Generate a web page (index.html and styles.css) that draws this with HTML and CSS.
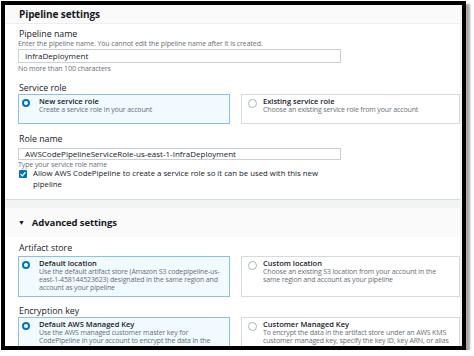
FILE: index.html
```html
<!DOCTYPE html>
<html lang="en">
<head>
  <meta charset="UTF-8" />
  <title>Create pipeline</title>
  <meta name="viewport" content="width=device-width, initial-scale=1.0" />
  <link rel="stylesheet" href="styles.css">
</head>
<body>
  <div class="frame">
    <section class="panel first">
      <div class="panel-head"><h2>Pipeline settings</h2></div>
      <div class="panel-body">
        <div class="label">Pipeline name</div>
        <div class="desc lead">Enter the pipeline name. You cannot edit the pipeline name after it is created.</div>
        <div class="input">InfraDeployment</div>
        <div class="desc hint first-hint">No more than 100 characters</div>

        <div class="label gap">Service role</div>
        <div class="tiles">
          <div class="tile on">
            <span class="radio"></span>
            <div>
              <div class="tile-title">New service role</div>
              <div class="desc">Create a service role in your account</div>
            </div>
          </div>
          <div class="tile">
            <span class="radio"></span>
            <div>
              <div class="tile-title">Existing service role</div>
              <div class="desc">Choose an existing service role from your account</div>
            </div>
          </div>
        </div>

        <div class="label gap">Role name</div>
        <div class="input small">AWSCodePipelineServiceRole-us-east-1-InfraDeployment</div>
        <div class="desc hint">Type your service role name</div>
        <div class="check">
          <span class="box">
            <svg viewBox="0 0 10 10" width="8" height="8"><path d="M2 5.2 L4.2 7.3 L8 2.8" fill="none" stroke="#fff" stroke-width="1.6"/></svg>
          </span>
          <span>Allow AWS CodePipeline to create a service role so it can be used with this new pipeline</span>
        </div>
      </div>
    </section>

    <section class="panel">
      <div class="panel-head tall"><h2><span class="caret">&#9660;</span>Advanced settings</h2></div>
      <div class="panel-body">
        <div class="label">Artifact store</div>
        <div class="tiles">
          <div class="tile on">
            <span class="radio"></span>
            <div>
              <div class="tile-title">Default location</div>
              <div class="desc">Use the default artifact store (Amazon S3 codepipeline-us-<br>east-1-458144523623) designated in the same region and<br>account as your pipeline</div>
            </div>
          </div>
          <div class="tile">
            <span class="radio"></span>
            <div>
              <div class="tile-title">Custom location</div>
              <div class="desc">Choose an existing S3 location from your account in the<br>same region and account as your pipeline</div>
            </div>
          </div>
        </div>

        <div class="label gap">Encryption key</div>
        <div class="tiles">
          <div class="tile on">
            <span class="radio"></span>
            <div>
              <div class="tile-title">Default AWS Managed Key</div>
              <div class="desc">Use the AWS managed customer master key for<br>CodePipeline in your account to encrypt the data in the</div>
            </div>
          </div>
          <div class="tile">
            <span class="radio"></span>
            <div>
              <div class="tile-title">Customer Managed Key</div>
              <div class="desc">To encrypt the data in the artifact store under an AWS KMS<br>customer managed key, specify the key ID, key ARN, or alias</div>
            </div>
          </div>
        </div>
      </div>
    </section>
  </div>
</body>
</html>
```

FILE: styles.css
```css
body {
  margin: 0;
  background: #fff;
  font-family: 'Open Sans', 'Noto Sans', sans-serif;
  color: #16191f;
}

.frame {
  margin: 1px 0 0 1px;
  width: 465px;
  height: 349px;
  box-sizing: border-box;
  border: 4px solid #000;
  background: #f2f3f3;
  box-shadow: 4px 3px 2px rgba(0,0,0,0.35);
  overflow: hidden;
}

.panel {
  background: #fff;
  margin-right: 2px;
}

.panel.first {
  border-bottom: 1px solid #d5dbdb;
  margin-bottom: 8px;
}

.panel-head {
  height: 18px;
  background: #fafafa;
  border-bottom: 1px solid #eaeded;
  padding-left: 14px;
  display: flex;
  align-items: center;
}

.panel-head.tall {
  height: 29px;
  border-bottom: none;
  padding-left: 13px;
}

.panel-head h2 {
  margin: 0;
  font-size: 10px;
  font-weight: 700;
  letter-spacing: -0.1px;
}

.panel-head.tall h2 {
  font-size: 9.5px;
}

.caret {
  font-size: 7px;
  margin-right: 7px;
  position: relative;
  top: -1px;
}

.panel-body {
  padding: 6px 0 9px 13px;
}

.first .panel-body {
  padding-top: 5px;
}

.label {
  font-size: 8.8px;
  line-height: 10px;
  padding-left: 1px;
}

.label.gap {
  margin-top: 10px;
}

.panel + .panel .label.gap {
  margin-top: 9px;
}

.desc {
  font-size: 7px;
  line-height: 8px;
  color: #687078;
  letter-spacing: -0.1px;
}

.desc.lead {
  margin-top: 1px;
}

.tile .desc {
  white-space: nowrap;
  letter-spacing: -0.15px;
}

.hint {
  margin-top: 1px;
}

.hint.first-hint {
  margin-top: 2px;
}

.input {
  margin-top: 1px;
  width: 323px;
  height: 14px;
  box-sizing: border-box;
  border: 1px solid #c9d0d1;
  padding-left: 6px;
  font-size: 8px;
  line-height: 12px;
}

.input.small {
  margin-top: 4px;
  height: 12px;
  line-height: 10px;
}

.tiles {
  margin-top: 1px;
  display: grid;
  grid-template-columns: 212px 1fr;
  gap: 11px;
}

.panel-body > .label:first-child + .tiles {
  margin-top: 3px;
}

.tile {
  display: flex;
  gap: 6px;
  min-height: 30px;
  box-sizing: border-box;
  border: 1px solid #d5dbdb;
  padding: 2px 4px 2px 6px;
  overflow: hidden;
}

.tile.on {
  background: #f1faff;
  border-color: #8ebfe3;
  padding-left: 3px;
  gap: 9px;
}

.panel + .panel .tile {
  min-height: 41px;
}

.radio {
  flex: none;
  width: 7px;
  height: 7px;
  margin-top: 2px;
  border-radius: 50%;
  border: 1px solid #aab7b8;
  background: #fff;
}

.tile.on .radio {
  width: 4px;
  height: 4px;
  border: 2.5px solid #0073bb;
}

.tile-title {
  font-size: 7.5px;
  line-height: 9px;
  font-weight: 600;
}

.check {
  margin-top: -1px;
  display: flex;
  gap: 6px;
  font-size: 7.8px;
  line-height: 11px;
  padding-left: 1px;
  width: 305px;
}

.box {
  flex: none;
  width: 8px;
  height: 8px;
  margin-top: 1.5px;
  background: #0073bb;
  border-radius: 1px;
  display: flex;
  align-items: center;
  justify-content: center;
}
```
